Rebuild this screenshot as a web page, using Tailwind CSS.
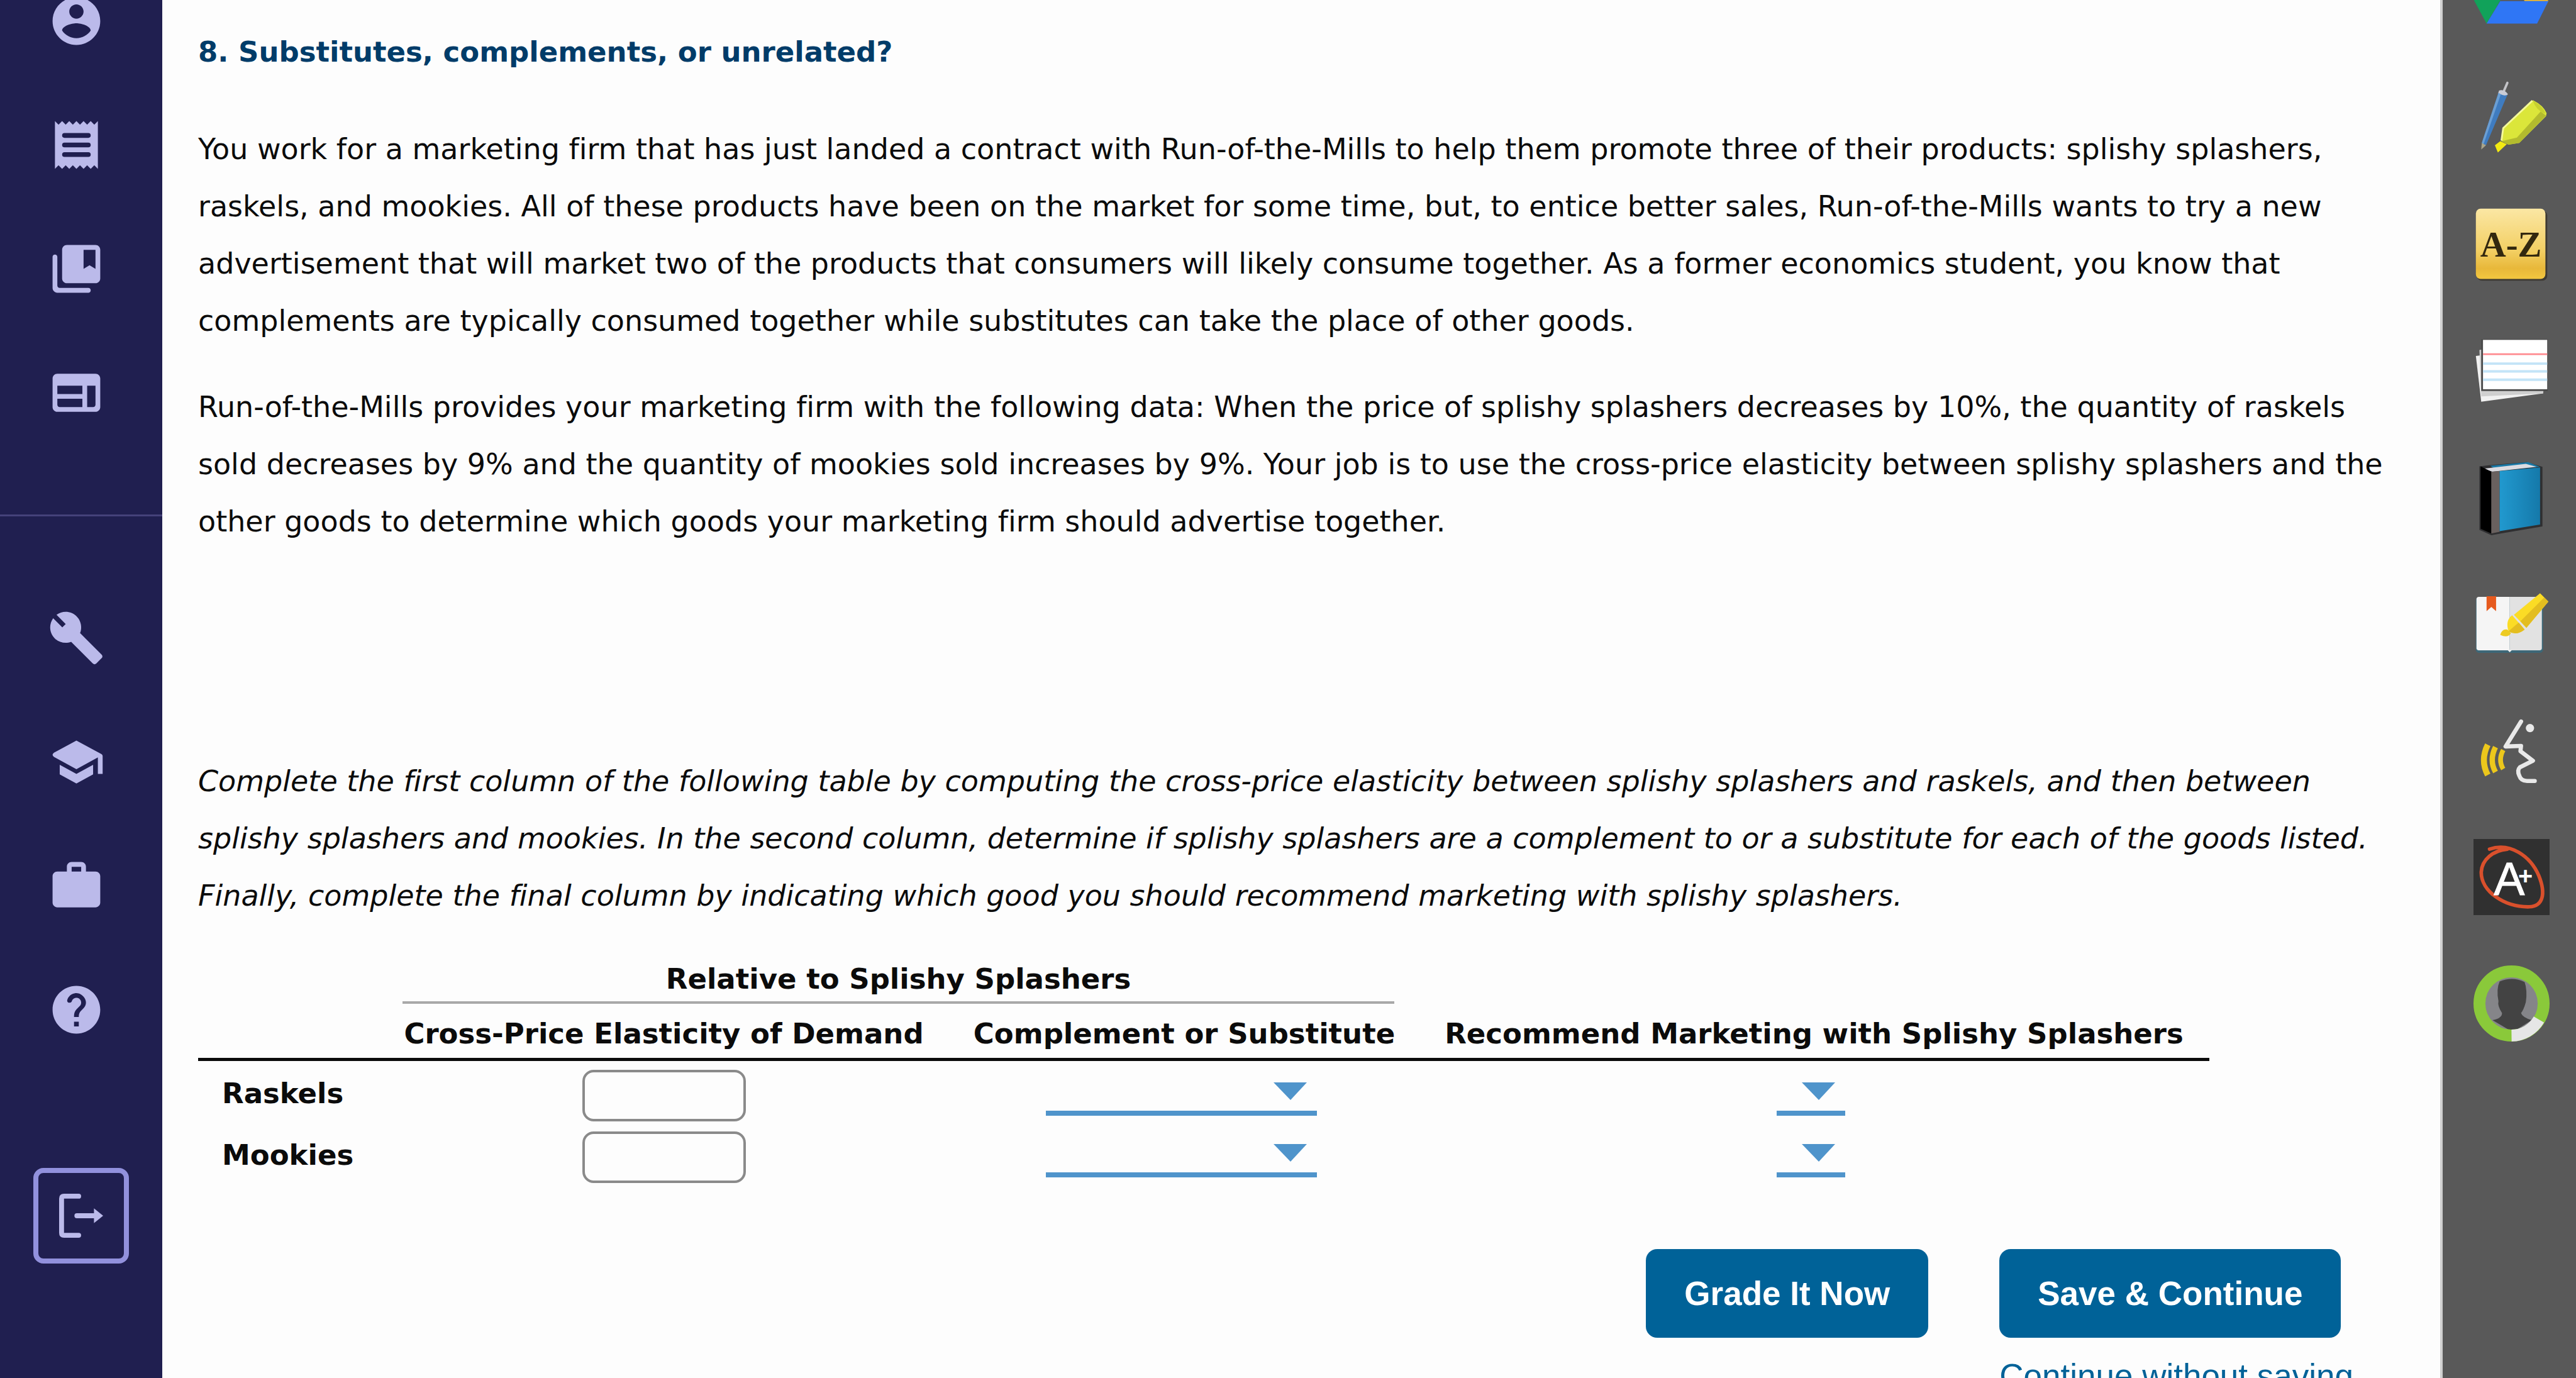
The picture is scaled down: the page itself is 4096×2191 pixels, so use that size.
<!DOCTYPE html>
<html lang="en">
<head>
    <meta charset="UTF-8">
    <meta name="viewport" content="width=device-width, initial-scale=1.0">
    <title>Substitutes, complements, or unrelated?</title>
    <script src="https://cdn.jsdelivr.net/npm/@tailwindcss/browser@4"></script>
</head>
<body class="bg-[#fdfdfd]">
    <div class="flex h-screen overflow-hidden">

        <!-- Left navigation -->
        <nav class="w-[258px] shrink-0 bg-[#201f50] text-[#bbbaea] flex flex-col">
            <div class="-mt-3 pr-4 flex flex-col items-center gap-[106px]">
                <a href="#" aria-label="Account">
                    <svg class="size-[91px]" viewBox="0 0 24 24" fill="currentColor"><path d="M12 2C6.48 2 2 6.48 2 12s4.48 10 10 10 10-4.48 10-10S17.52 2 12 2zm0 3c1.66 0 3 1.34 3 3s-1.34 3-3 3-3-1.34-3-3 1.34-3 3-3zm0 14.200c-2.500 0-4.710-1.280-6-3.220.030-1.990 4-3.080 6-3.080 1.990 0 5.970 1.090 6 3.080-1.290 1.940-3.500 3.220-6 3.220z"/></svg>
                </a>
                <a href="#" aria-label="Receipts">
                    <svg class="size-[91px]" viewBox="0 0 24 24" fill="currentColor"><path fill-rule="evenodd" d="M19.500 3.500 18 2l-1.500 1.500L15 2l-1.500 1.500L12 2l-1.500 1.500L9 2 7.500 3.500 6 2 4.500 3.500 3 2v20l1.500-1.500L6 22l1.500-1.500L9 22l1.500-1.500L12 22l1.500-1.500L15 22l1.500-1.500L18 22l1.500-1.500L21 22V2l-1.500 1.500zM17 17H7a1 1 0 0 1 0-2h10a1 1 0 0 1 0 2zm0-4H7a1 1 0 0 1 0-2h10a1 1 0 0 1 0 2zm0-4H7a1 1 0 0 1 0-2h10a1 1 0 0 1 0 2z"/></svg>
                </a>
                <a href="#" aria-label="Library">
                    <svg class="size-[91px]" viewBox="0 0 24 24" fill="currentColor"><path d="M3 6c-.550 0-1 .450-1 1v13c0 1.100.900 2 2 2h13c.550 0 1-.450 1-1s-.450-1-1-1H5c-.550 0-1-.450-1-1V7c0-.550-.450-1-1-1z"/><path d="M20 2H8c-1.100 0-2 .900-2 2v12c0 1.100.900 2 2 2h12c1.100 0 2-.900 2-2V4c0-1.100-.900-2-2-2zm0 10-2.500-1.500L15 12V4h5v8z"/></svg>
                </a>
                <a href="#" aria-label="Dashboard">
                    <svg class="size-[91px]" viewBox="0 0 24 24" fill="currentColor"><path d="M20 4H4c-1.100 0-1.990.900-1.990 2L2 18c0 1.100.900 2 2 2h16c1.100 0 2-.900 2-2V6c0-1.100-.900-2-2-2zm-5.500 14H5c-.550 0-1-.450-1-1v-2.500h10.500V18zm0-5.500H4V9h10.500v3.500zM19 18h-2.500V9H20v8c0 .550-.450 1-1 1z"/></svg>
                </a>
            </div>

            <hr class="my-[148px] border-0 h-[3px] bg-[#45427a]">

            <div class="pr-4 flex flex-col items-center gap-[106px]">
                <a href="#" aria-label="Tools">
                    <svg class="size-[91px]" viewBox="0 0 24 24" fill="currentColor"><path d="m22.610 18.990-9.080-9.080c.930-2.340.450-5.100-1.440-7C9.790.610 6.210.400 3.660 2.260L7.500 6.110 6.080 7.520 2.250 3.690C.390 6.230.600 9.820 2.900 12.110c1.860 1.860 4.570 2.350 6.890 1.480l9.110 9.110c.390.390 1.020.390 1.410 0l2.300-2.300c.400-.380.400-1.010 0-1.410z"/></svg>
                </a>
                <a href="#" aria-label="Courses">
                    <svg class="size-[91px]" viewBox="0 0 24 24" fill="currentColor"><path d="M5 13.180v4L12 21l7-3.820v-4L12 17l-7-3.820zM12 3 2.600 8.130Q1.400 9 2.600 9.870L12 15l9-4.910V17h2V9.590Q23 9 22.500 8.730L12 3z"/></svg>
                </a>
                <a href="#" aria-label="Career">
                    <svg class="size-[91px]" viewBox="0 0 24 24" fill="currentColor"><path d="M20 6h-4V4c0-1.110-.890-2-2-2h-4c-1.110 0-2 .890-2 2v2H4c-1.110 0-2 .890-2 2v11c0 1.110.890 2 2 2h16c1.110 0 2-.890 2-2V8c0-1.110-.890-2-2-2zm-6 0h-4V4h4v2z"/></svg>
                </a>
                <a href="#" aria-label="Help">
                    <svg class="size-[91px]" viewBox="0 0 24 24" fill="currentColor"><path d="M12 2C6.480 2 2 6.480 2 12s4.480 10 10 10 10-4.480 10-10S17.520 2 12 2zm1 17h-2v-2h2v2zm2.070-7.750-.900.920C13.450 12.900 13 13.500 13 15h-2v-.500c0-1.100.450-2.100 1.170-2.830l1.240-1.260c.460-.440.680-1.100.550-1.800-.130-.720-.690-1.330-1.390-1.530-1.110-.310-2.140.320-2.470 1.270-.120.370-.430.650-.820.650h-.300C8.400 9 8 8.440 8.160 7.880c.430-1.470 1.680-2.590 3.230-2.830 1.520-.240 2.970.550 3.870 1.800 1.180 1.630.830 3.380-.190 4.400z"/></svg>
                </a>
            </div>

            <button aria-label="Sign out" class="mt-[206px] self-center size-[152px] shrink-0 rounded-[16px] border-8 border-[#9291dd] flex items-center justify-center">
                <svg class="size-[70px]" viewBox="0 0 72 72" fill="none" stroke="currentColor" stroke-width="8" stroke-linecap="round" stroke-linejoin="round"><path d="M32 4H8Q4 4 4 8V64Q4 68 8 68H32M29 36H58"/><path d="M57 24 72 36 57 48Z" fill="currentColor" stroke="none"/></svg>
            </button>
        </nav>

        <!-- Question -->
        <main class="flex-1 min-w-0 px-[57px] pt-[37px] text-[46px] leading-[91px] text-[#0b0b0b] font-['Verdana','DejaVu_Sans',sans-serif] [font-variant-ligatures:none]">
            <h1 class="text-[45px] font-bold text-[#003c69]">8. Substitutes, complements, or unrelated?</h1>

            <p class="mt-16 whitespace-nowrap">You work for a marketing firm that has just landed a contract with Run-of-the-Mills to help them promote three of their products: splishy splashers,<br>
                raskels, and mookies. All of these products have been on the market for some time, but, to entice better sales, Run-of-the-Mills wants to try a new<br>
                advertisement that will market two of the products that consumers will likely consume together. As a former economics student, you know that<br>
                complements are typically consumed together while substitutes can take the place of other goods.</p>

            <p class="mt-[46px] whitespace-nowrap">Run-of-the-Mills provides your marketing firm with the following data: When the price of splishy splashers decreases by 10%, the quantity of raskels<br>
                sold decreases by 9% and the quantity of mookies sold increases by 9%. Your job is to use the cross-price elasticity between splishy splashers and the<br>
                other goods to determine which goods your marketing firm should advertise together.</p>

            <p class="mt-[322px] whitespace-nowrap italic">Complete the first column of the following table by computing the cross-price elasticity between splishy splashers and raskels, and then between<br>
                splishy splashers and mookies. In the second column, determine if splishy splashers are a complement to or a substitute for each of the goods listed.<br>
                Finally, complete the final column by indicating which good you should recommend marketing with splishy splashers.</p>

            <table class="mt-[51px] w-[3198px] table-fixed border-separate border-spacing-0 whitespace-nowrap text-[45px]">
                <colgroup>
                    <col class="w-[286px]">
                    <col class="w-[909px]">
                    <col class="w-[746px]">
                    <col>
                </colgroup>
                <thead>
                    <tr>
                        <td></td>
                        <th colspan="2" class="px-[39px]">
                            <div class="border-b-4 border-[#a9a9a9] leading-[71px]">Relative to Splishy Splashers</div>
                        </th>
                        <td></td>
                    </tr>
                    <tr class="leading-[76px]">
                        <td class="border-b-5 border-[#0b0b0b]"></td>
                        <th id="elasticity" class="pt-[10px] border-b-5 border-[#0b0b0b]">Cross-Price Elasticity of Demand</th>
                        <th id="relation" class="pt-[10px] border-b-5 border-[#0b0b0b]">Complement or Substitute</th>
                        <th id="recommend" class="pt-[10px] border-b-5 border-[#0b0b0b]">Recommend Marketing with Splishy Splashers</th>
                    </tr>
                </thead>
                <tbody class="align-top leading-[76px]">
                    <tr class="h-[98px]">
                        <th id="raskels" class="pt-[14px] pl-[38px] text-left">Raskels</th>
                        <td class="pt-[14px]">
                            <input type="text" aria-labelledby="raskels elasticity" class="block mx-auto w-[260px] h-[82px] px-4 rounded-[18px] border-4 border-[#8a8a8a] bg-[#fdfdfd]">
                        </td>
                        <td class="pt-[14px] pr-[10px]">
                            <div class="relative mx-auto w-[431px]">
                                <select aria-labelledby="raskels relation" class="block w-full h-[73px] appearance-none border-b-8 border-[#4f94cb]"><option></option></select>
                                <svg class="absolute right-4 top-5 w-[53px] h-7 pointer-events-none" viewBox="0 0 53 28"><path d="M0 0H53L27 28Z" fill="#4f94cb"/></svg>
                            </div>
                        </td>
                        <td class="pt-[14px] pr-[10px]">
                            <div class="relative mx-auto w-[109px]">
                                <select aria-labelledby="raskels recommend" class="block w-full h-[73px] appearance-none border-b-8 border-[#4f94cb]"><option></option></select>
                                <svg class="absolute right-4 top-5 w-[53px] h-7 pointer-events-none" viewBox="0 0 53 28"><path d="M0 0H53L27 28Z" fill="#4f94cb"/></svg>
                            </div>
                        </td>
                    </tr>
                    <tr class="h-[98px]">
                        <th id="mookies" class="pt-[14px] pl-[38px] text-left">Mookies</th>
                        <td class="pt-[14px]">
                            <input type="text" aria-labelledby="mookies elasticity" class="block mx-auto w-[260px] h-[82px] px-4 rounded-[18px] border-4 border-[#8a8a8a] bg-[#fdfdfd]">
                        </td>
                        <td class="pt-[14px] pr-[10px]">
                            <div class="relative mx-auto w-[431px]">
                                <select aria-labelledby="mookies relation" class="block w-full h-[73px] appearance-none border-b-8 border-[#4f94cb]"><option></option></select>
                                <svg class="absolute right-4 top-5 w-[53px] h-7 pointer-events-none" viewBox="0 0 53 28"><path d="M0 0H53L27 28Z" fill="#4f94cb"/></svg>
                            </div>
                        </td>
                        <td class="pt-[14px] pr-[10px]">
                            <div class="relative mx-auto w-[109px]">
                                <select aria-labelledby="mookies recommend" class="block w-full h-[73px] appearance-none border-b-8 border-[#4f94cb]"><option></option></select>
                                <svg class="absolute right-4 top-5 w-[53px] h-7 pointer-events-none" viewBox="0 0 53 28"><path d="M0 0H53L27 28Z" fill="#4f94cb"/></svg>
                            </div>
                        </td>
                    </tr>
                </tbody>
            </table>

            <div class="mt-[103px] pr-[81px] flex items-start justify-end gap-[113px] text-[53px] leading-[64px] whitespace-nowrap font-['Liberation_Sans',Arial,sans-serif]">
                <button class="h-[141px] px-[61px] rounded-[18px] bg-[#006298] text-white font-bold">Grade It Now</button>
                <div class="flex flex-col items-start">
                    <button class="h-[141px] px-[61px] rounded-[18px] bg-[#006298] text-white font-bold">Save &amp; Continue</button>
                    <a href="#" class="mt-[29px] text-[#006298]">Continue without saving</a>
                </div>
            </div>
        </main>

        <!-- Study tools -->
        <aside class="w-[216px] shrink-0 border-l-4 border-[#d0d0d0] bg-[#595959]">
            <div class="-mt-[73px] pl-[49px] flex flex-col items-start gap-20">
                <a href="#" aria-label="Google Drive">
                    <svg class="size-[121px]" viewBox="0 0 128 128">
                        <path d="M44 10H84L126 79H86Z" fill="#fbc02d"/>
                        <path d="M44 10 64 46 22 117 1 78Z" fill="#11a25a"/>
                        <path d="M45 79H126L107 117H22Z" fill="#2f76f5"/>
                    </svg>
                </a>
                <a href="#" aria-label="Highlighter">
                    <svg class="size-[121px]" viewBox="0 0 128 128">
                        <path d="M57 4 51 18" stroke="#c4c4c8" stroke-width="4" stroke-linecap="round"/>
                        <path d="M43 17Q51 14 58 23L54 27 41 23Z" fill="#c9ccd6"/>
                        <path d="M42 21Q50 27 57 24L21 109 14 105Z" fill="#3f7cc0"/>
                        <path d="M42 21 46 23 17 107 14 105Z" fill="#6b9fd4"/>
                        <path d="M14 105 21 109 13 116Z" fill="#a9a48a"/>
                        <path d="M100 33Q118 42 123 55L122 60 77 105 59 108 47 102 50 80Z" fill="#dbe63a"/>
                        <path d="M122 59 77 105 59 108 47 102 73 96 113 52Z" fill="#b3bb2e"/>
                        <path d="M99 34 50 80 47 101" fill="none" stroke="#f5fa9a" stroke-width="3"/>
                        <path d="M100 34Q117 42 121 56Q105 50 100 34Z" fill="#c6d02f"/>
                        <path d="M45 102 56 107 41 121 36 109Z" fill="#f3ea12"/>
                    </svg>
                </a>
                <a href="#" aria-label="Glossary">
                    <svg class="size-[121px]" viewBox="0 0 128 128">
                        <defs><linearGradient id="gold" x1="0" y1="0" x2="0" y2="1"><stop offset="0" stop-color="#fbe7a4"/><stop offset=".6" stop-color="#f3cf63"/><stop offset=".85" stop-color="#e8b83a"/><stop offset="1" stop-color="#f3c73f"/></linearGradient></defs>
                        <rect x="6" y="6" width="118" height="118" rx="8" fill="#3e3a32"/>
                        <rect x="4" y="3" width="117" height="118" rx="8" fill="url(#gold)"/>
                        <text x="63" y="84" text-anchor="middle" font-family="Liberation Serif, serif" font-weight="bold" font-size="60" fill="#33280f">A-Z</text>
                    </svg>
                </a>
                <a href="#" aria-label="Flashcards">
                    <svg class="size-[121px]" viewBox="0 0 128 128">
                        <path d="M4 38 20 36 117 97V101L13 115Z" fill="#f1f1f1"/>
                        <path d="M10 28 20 26 118 95 117 101 13 106Z" fill="#cfcfcf"/>
                        <rect x="13" y="10" width="112" height="87" fill="#4a4a4a"/>
                        <rect x="16" y="11" width="108" height="83" fill="#fff"/>
                        <path d="M16 35H124" stroke="#ff8a8f" stroke-width="3"/>
                        <path d="M16 51H124M16 64H124M16 78H124" stroke="#c3e4f7" stroke-width="4"/>
                    </svg>
                </a>
                <a href="#" aria-label="Textbook">
                    <svg class="size-[121px]" viewBox="0 0 128 128">
                        <defs><linearGradient id="cover"><stop offset="0" stop-color="#2199cf"/><stop offset="1" stop-color="#1579aa"/></linearGradient></defs>
                        <path d="M28 9 90 4 116 12V112L46 124 30 127 10 118V11Z" fill="#2f2f31"/>
                        <path d="M28 10 92 4 112 12 40 18Z" fill="#1b79a6"/>
                        <path d="M16 15 88 7 106 12 32 20Z" fill="#dcdce2"/>
                        <path d="M12 11 30 20V124L12 116Z" fill="#000"/>
                        <path d="M30 20 44 19V121L30 124Z" fill="#69615f"/>
                        <path d="M44 19 112 13V109L44 120Z" fill="url(#cover)"/>
                    </svg>
                </a>
                <a href="#" aria-label="Notebook">
                    <svg class="size-[121px]" viewBox="0 0 128 128">
                        <rect x="4" y="19" width="113" height="93" rx="5" fill="#3d6878"/>
                        <path d="M9 18H61V108H9Q5 108 5 104V22Q5 18 9 18Z" fill="#f5f5f5"/>
                        <path d="M61 18H111Q115 18 115 22V104Q115 108 111 108H61Z" fill="#e2e2e2"/>
                        <path d="M57 107H65L61 111Z" fill="#f5f5f5"/>
                        <path d="M22 17H38V42L30 35 22 42Z" fill="#e65a1e"/>
                        <path d="M112 12 126 26 89 70 68 48Z" fill="#fbdc25"/>
                        <path d="M119 19 126 26 89 70 79 59Z" fill="#e3bd20"/>
                        <path d="M65 49 86 73Q72 84 59 76 53 58 65 49Z" fill="#fbdc25"/>
                        <path d="M76 61 86 73Q72 84 59 76Z" fill="#e3bd20"/>
                        <path d="M45 82Q48 71 57 73L63 79Q58 88 45 82Z" fill="#edcb22"/>
                    </svg>
                </a>
                <a href="#" aria-label="Read aloud">
                    <svg class="size-[121px]" viewBox="0 0 128 128" fill="none" stroke-linejoin="round">
                        <path d="M80 15 54 57 80 56 79 65 100 81 78 92Q73 97 77 106 80 115 90 115H103" stroke="#e9e9e9" stroke-width="7" stroke-linecap="round"/>
                        <circle cx="95" cy="26" r="7" fill="#e9e9e9"/>
                        <path d="M24 54Q11 80 24 105" stroke="#ecc71c" stroke-width="10"/>
                        <path d="M37 58Q26 80 37 100" stroke="#ecc71c" stroke-width="9"/>
                        <path d="M50 63Q41 80 50 95" stroke="#ecc71c" stroke-width="8"/>
                    </svg>
                </a>
                <a href="#" aria-label="Grades">
                    <svg class="size-[121px]" viewBox="0 0 128 128">
                        <rect width="128" height="128" fill="#303030"/>
                        <path d="M27 17C62 5 96 29 110 62 122 92 117 113 94 114 52 115 13 88 13 56 14 34 34 19 57 17" fill="none" stroke="#d9502c" stroke-width="6" stroke-linecap="round"/>
                        <text x="34" y="94" font-family="Liberation Sans Narrow, Liberation Sans, sans-serif" font-size="78" fill="#fff" stroke="#fff" stroke-width="1">A</text>
                        <text x="75" y="76" font-family="Liberation Sans, Arial, sans-serif" font-weight="bold" font-size="42" fill="#fff">+</text>
                    </svg>
                </a>
                <a href="#" aria-label="Profile">
                    <svg class="size-[121px]" viewBox="0 0 128 128">
                        <circle cx="64" cy="64" r="45" fill="#858589"/>
                        <path d="M44 27Q66 18 86 28 91 42 88 62 84 76 80 80 82 87 98 92L66 112 32 92Q48 89 48 80 40 68 42 60 38 40 44 27Z" fill="#434343"/>
                        <circle cx="64" cy="64" r="54" fill="none" stroke="#8ac93a" stroke-width="20"/>
                        <path d="M110 91A54 54 0 0 1 64 118" fill="none" stroke="#e6e6e6" stroke-width="20"/>
                    </svg>
                </a>
            </div>
        </aside>
    </div>
</body>
</html>
